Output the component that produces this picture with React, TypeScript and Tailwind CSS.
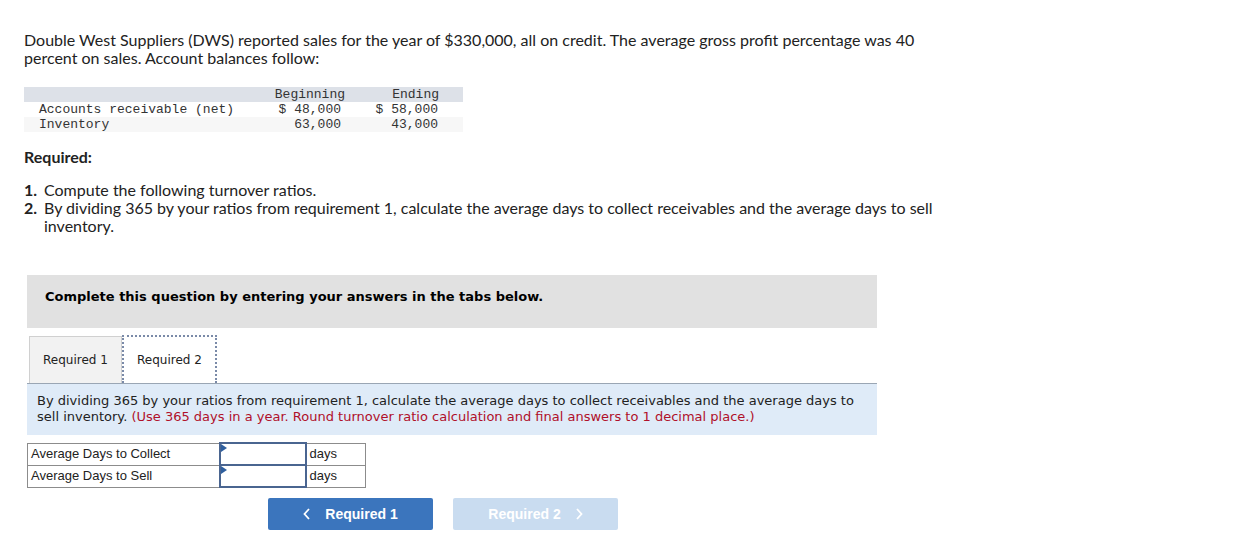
export default function App() {
  const balances = [
    { label: "Accounts receivable (net)", begin: "$ 48,000", end: "$ 58,000", bg: "bg-white" },
    { label: "Inventory", begin: "63,000", end: "43,000", bg: "bg-[#f7f7f7]" },
  ];
  const rows = ["Average Days to Collect", "Average Days to Sell"];

  return (
    <div className="min-h-screen bg-white text-[#222] font-['Lato','Open_Sans',sans-serif]">
      <div className="pl-6 pt-[31px] w-[920px]">
        <p className="text-[16px] leading-[18px]">
          Double West Suppliers (DWS) reported sales for the year of $330,000, all on credit. The average gross profit percentage was 40 percent on sales. Account balances follow:
        </p>

        {/* balances */}
        <div className="mt-[20px] w-[439px] font-['Liberation_Mono',monospace] text-[13px] leading-[15px] text-[#333]">
          <div className="flex bg-[#dde1e8]">
            <div className="w-[231px]" />
            <div className="w-[90px] text-right">Beginning</div>
            <div className="w-[94px] text-right">Ending</div>
          </div>
          {balances.map((b) => (
            <div key={b.label} className={`flex ${b.bg}`}>
              <div className="w-[231px] pl-[15px]">{b.label}</div>
              <div className="w-[86px] text-right">{b.begin}</div>
              <div className="w-[97px] text-right">{b.end}</div>
            </div>
          ))}
        </div>

        <p className="mt-[16px] font-bold text-[16px] leading-[18px]">Required:</p>
        <ol className="mt-[15px] text-[16px] leading-[18px] w-[920px]">
          <li className="flex">
            <span className="w-5 font-bold shrink-0">1.</span>
            <span>Compute the following turnover ratios.</span>
          </li>
          <li className="flex">
            <span className="w-5 font-bold shrink-0">2.</span>
            <span>
              By dividing 365 by your ratios from requirement 1, calculate the average days to collect receivables and the average days to sell inventory.
            </span>
          </li>
        </ol>
      </div>

      <div className="ml-[27px] mt-[40px] w-[850px] font-['DejaVu_Sans','Verdana',sans-serif]">
        <div className="h-[53px] bg-[#e1e1e1] pt-[14px] pl-[18px] font-bold text-[13px] leading-[16px] text-black">
          Complete this question by entering your answers in the tabs below.
        </div>

        <div className="mt-2 flex items-end border-b border-[#9aa6b4] h-[48px]">
          <div className="ml-[2px] h-[47px] w-[93px] bg-[#f2f2f2] border border-[#d0d0d0] border-b-0 flex items-center justify-center text-[12px] text-[#222]">
            Required 1
          </div>
          <div className="h-[48px] w-[95px] bg-white border-2 border-dotted border-[#7a8aa8] border-b-0 flex items-center justify-center text-[12px] text-[#222]">
            Required 2
          </div>
        </div>

        <div className="bg-[#dfebf8] h-[51px] px-[10px] pt-[9px] text-[13px] leading-[16px] text-[#222]">
          <p>
            By dividing 365 by your ratios from requirement 1, calculate the average days to collect receivables and the average days to sell inventory.{" "}
            <span className="text-[#b0102a]">(Use 365 days in a year. Round turnover ratio calculation and final answers to 1 decimal place.)</span>
          </p>
        </div>

        <table className="mt-[7px] border-collapse font-['Liberation_Sans',Arial,sans-serif] text-[13px] text-[#222]">
          <tbody>
            {rows.map((r) => (
              <tr key={r} className="h-[22px]">
                <td className="w-[192px] border border-[#8c8c8c] pl-[3px] leading-[20px]">{r}</td>
                <td className="w-[86px] border-2 border-[#4a6590] p-0 relative">
                  <span className="absolute left-0 top-0 w-0 h-0 border-t-[4px] border-b-[4px] border-l-[6px] border-t-transparent border-b-transparent border-l-[#2f5f9e]" />
                </td>
                <td className="w-[60px] border border-[#8c8c8c] pl-[3px] leading-[20px]">days</td>
              </tr>
            ))}
          </tbody>
        </table>

        <div className="mt-[10px] ml-[241px] flex gap-[20px]">
          <button className="w-[165px] h-[32px] rounded-[2px] bg-[#3b75bd] text-white font-['Liberation_Sans',Arial,sans-serif] font-bold text-[14px] flex items-center justify-center gap-[14px]">
            <svg width="8" height="12" viewBox="0 0 8 12" fill="none" stroke="white" strokeWidth="1.8">
              <path d="M6 1 L1.5 6 L6 11" />
            </svg>
            Required 1
          </button>
          <button className="w-[165px] h-[32px] rounded-[2px] bg-[#c9dcf0] text-white font-['Liberation_Sans',Arial,sans-serif] font-bold text-[14px] flex items-center justify-center gap-[14px]">
            Required 2
            <svg width="8" height="12" viewBox="0 0 8 12" fill="none" stroke="white" strokeWidth="1.8">
              <path d="M2 1 L6.5 6 L2 11" />
            </svg>
          </button>
        </div>
      </div>
    </div>
  );
}
